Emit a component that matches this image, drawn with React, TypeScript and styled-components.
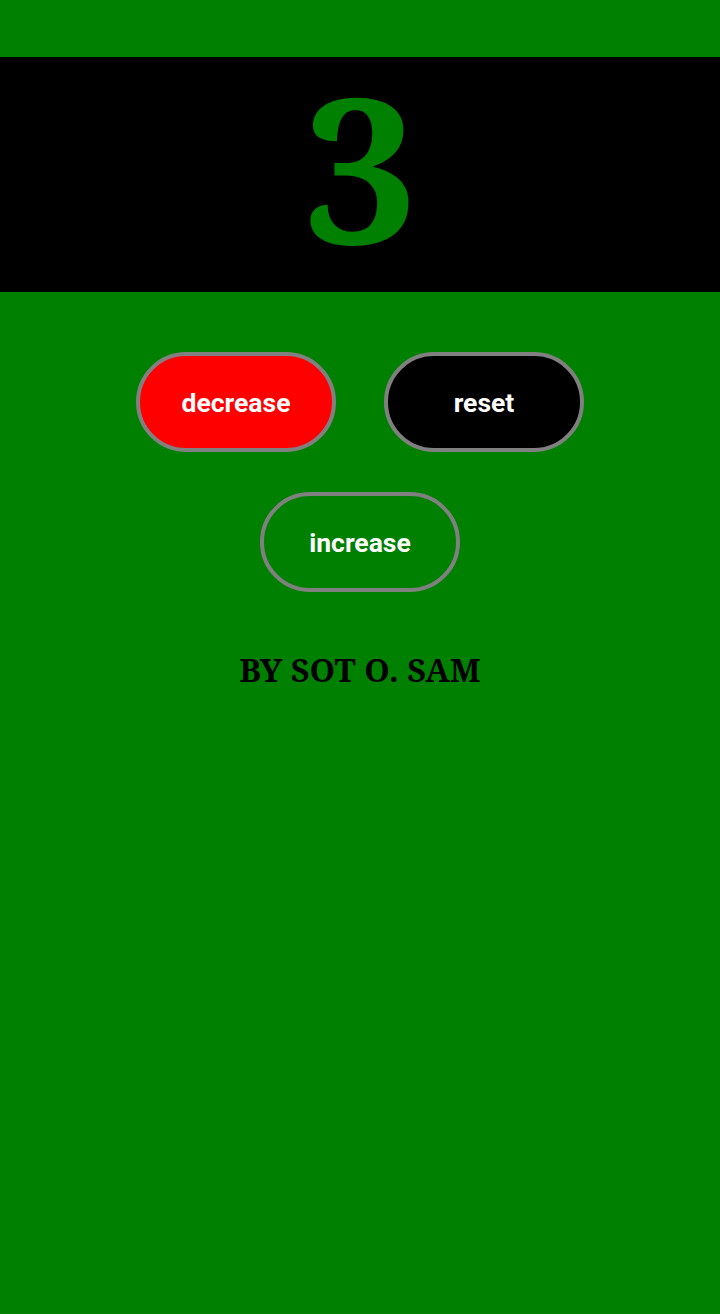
import React, { FC, useState } from "react";
import styled, { createGlobalStyle } from "styled-components";

const GlobalStyle = createGlobalStyle`
  html, body {
    margin: 0;
    padding: 0;
    background-color: green;
    min-height: 100%;
  }
  body {
    min-height: 1314px;
  }
`;

const Page = styled.div`
  padding-top: 57px;
  text-align: center;
`;

const CountBand = styled.div`
  background-color: #000;
  height: 235px;
  box-sizing: border-box;
  padding-bottom: 18px;
  display: flex;
  align-items: center;
  justify-content: center;
`;

const Count = styled.h1`
  margin: 0;
  color: green;
  font-family: "Noto Serif", "DejaVu Serif", serif;
  font-weight: bold;
  font-size: 202px;
  line-height: 1;
`;

const Buttons = styled.div`
  display: flex;
  flex-wrap: wrap;
  justify-content: center;
  gap: 40px 48px;
  width: 450px;
  margin: 60px auto 0;
`;

const Button = styled.button<{ $bg: string }>`
  width: 200px;
  height: 100px;
  border: 4px solid gray;
  border-radius: 50px;
  background-color: ${(p) => p.$bg};
  color: #fff;
  font-family: Roboto, "Liberation Sans", sans-serif;
  font-weight: bold;
  font-size: 26.5px;
  cursor: pointer;
`;

const Byline = styled.h2`
  margin: 55px 0 0;
  color: #000;
  font-family: "Noto Serif", "DejaVu Serif", serif;
  font-weight: bold;
  font-size: 32.5px;
`;

const App: FC = () => {
  const [count, setCount] = useState(3);

  return (
    <>
      <GlobalStyle />
      <Page>
        <CountBand>
          <Count>{count}</Count>
        </CountBand>
        <Buttons>
          <Button $bg="red" onClick={() => setCount((c) => c - 1)}>decrease</Button>
          <Button $bg="black" onClick={() => setCount(0)}>reset</Button>
          <Button $bg="green" onClick={() => setCount((c) => c + 1)}>increase</Button>
        </Buttons>
        <Byline>BY SOT O. SAM</Byline>
      </Page>
    </>
  );
};

export default App;
